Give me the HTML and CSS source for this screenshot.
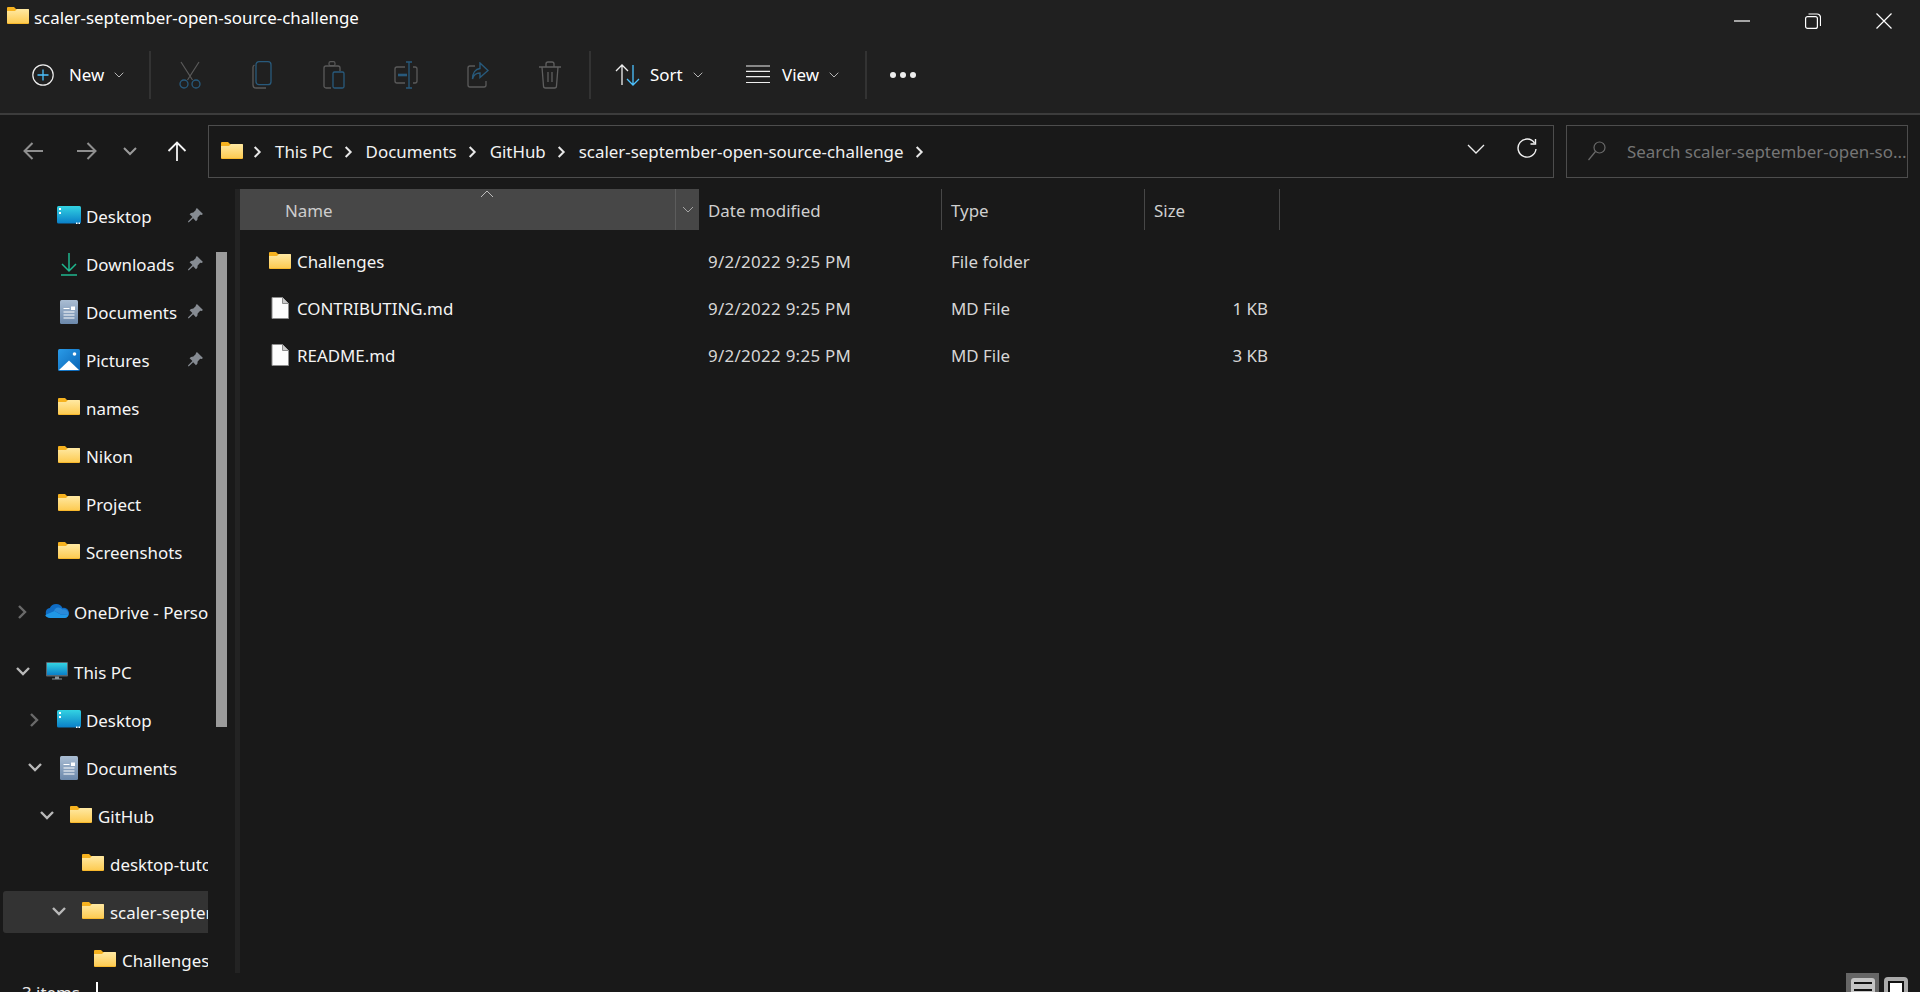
FILE: index.html
```html
<!DOCTYPE html>
<html lang="en">
<head>
<meta charset="utf-8">
<title>scaler-september-open-source-challenge</title>
<link rel="stylesheet" href="styles.css">
</head>
<body>
<svg class="defs" width="0" height="0" aria-hidden="true">
  <defs>
    <linearGradient id="gf" x1="0" y1="0" x2="0" y2="1"><stop offset="0" stop-color="#ffe9a3"/><stop offset="1" stop-color="#fdcb52"/></linearGradient>
    <linearGradient id="gd" x1="0" y1="0" x2="0" y2="1"><stop offset="0" stop-color="#33d3e2"/><stop offset="1" stop-color="#0a7fc8"/></linearGradient>
    <linearGradient id="gdoc" x1="0" y1="0" x2="0" y2="1"><stop offset="0" stop-color="#aabdd3"/><stop offset="1" stop-color="#6b88ab"/></linearGradient>
    <linearGradient id="gp" x1="0" y1="0" x2="1" y2="1"><stop offset="0" stop-color="#2a9be8"/><stop offset="1" stop-color="#0a64b4"/></linearGradient>
    <symbol id="folder" viewBox="0 0 22 17">
      <path d="M0 1a1 1 0 0 1 1-1h6l2 2h12a1 1 0 0 1 1 1v13a1 1 0 0 1-1 1H1a1 1 0 0 1-1-1z" fill="#f6b21f"/>
      <path d="M0 4h8l2-2h11a1 1 0 0 1 1 1v12.4a.8.8 0 0 1-.8.8H.8a.8.8 0 0 1-.8-.8z" fill="url(#gf)"/>
    </symbol>
    <symbol id="file" viewBox="0 0 18 22">
      <path d="M1 .5h10.500l6 6v15H1z" fill="#fdfdfd" stroke="#8c8c8c"/>
      <path d="M11.500.5v6h6" fill="#c9c9c9" stroke="#8c8c8c"/>
    </symbol>
    <symbol id="desktop" viewBox="0 0 24 18">
      <rect width="24" height="17.500" rx="1.500" fill="url(#gd)"/>
      <rect x="2" y="2" width="2" height="2" fill="#fff"/>
      <rect x="2" y="6" width="2" height="2" fill="#fff"/>
      <rect x="19" y="16.500" width="1.500" height="1.500" fill="#fff"/>
      <rect x="21.500" y="16.500" width="1.500" height="1.500" fill="#fff"/>
    </symbol>
    <symbol id="download" viewBox="0 0 24 24">
      <path d="M12 1v17M5 12l7 7 7-7M4 23h16" fill="none" stroke="#1fb78e" stroke-width="1.500"/>
    </symbol>
    <symbol id="document" viewBox="0 0 18 24">
      <rect width="18" height="24" rx="1.500" fill="url(#gdoc)"/>
      <path d="M3.500 8.500h6M3.500 12h11M3.500 15h11M3.500 18h11" stroke="#fff" fill="none"/>
      <rect x="11" y="6.500" width="4" height="3.500" fill="#fff"/>
    </symbol>
    <symbol id="picture" viewBox="0 0 22 22">
      <rect width="22" height="22" rx="1.500" fill="url(#gp)"/>
      <circle cx="16.500" cy="5" r="1.800" fill="#fff"/>
      <path d="M1 21 11 11.500 21 21z" fill="#fff"/>
    </symbol>
    <symbol id="pin" viewBox="0 0 16 16">
      <path d="M9.500 0 16 6.500l-1.500 1-1.500-.2-2.700 2.700-.3 2.500-1.500 1.500L5.500 10.800 1 15.300 0 15.200l.2-1L4.700 9.700 1.700 6.700 3.200 5.200l2.500-.3L8.400 2.200 8.300 1.200z" fill="#868b92"/>
    </symbol>
    <symbol id="cloud" viewBox="0 0 24 15">
      <path d="M5.500 15A5 5 0 0 1 4.800 5.100 7 7 0 0 1 17.500 5 5 5 0 0 1 20 15z" fill="#0f6cc4"/>
      <path d="M5.500 15c-2.500 0-4.500-.8-5.300-3L9.500 8l6 3.500 8 .5c-.6 2-2 3-4 3z" fill="#1f97e6"/>
      <path d="M9 7.500a5 5 0 0 1 8.500-1 4.800 4.800 0 0 1 6 5.500l-8-.8z" fill="#2a8ad8"/>
    </symbol>
    <symbol id="pc" viewBox="0 0 22 18">
      <rect width="22" height="14.500" rx="1" fill="#59666f"/>
      <rect x="1" y="1" width="20" height="12" fill="url(#gd)"/>
      <path d="M9 14.500h4v2h3v1H6v-1h3z" fill="#8a959c"/>
    </symbol>
    <symbol id="chev-r" viewBox="0 0 12 16"><path d="M2 2l6 6-6 6" fill="none" stroke="currentColor" stroke-width="2.400"/></symbol>
    <symbol id="chev-d" viewBox="0 0 16 12"><path d="M2 2l6 6 6-6" fill="none" stroke="currentColor" stroke-width="2.400"/></symbol>
    <symbol id="chev-s" viewBox="0 0 10 6"><path d="M.7.7 5 5 9.300.7" fill="none" stroke="currentColor"/></symbol>
  </defs>
</svg>

<div class="window">
  <header class="titlebar">
    <svg class="title-icon"><use href="#folder"/></svg>
    <span class="title-text">scaler-september-open-source-challenge</span>
    <div class="win-controls">
      <span class="win-btn"><svg width="16" height="2" viewBox="0 0 16 2"><path d="M0 1h16" stroke="#fff" stroke-width="1.200"/></svg></span>
      <span class="win-btn"><svg width="16" height="16" viewBox="0 0 16 16" fill="none" stroke="#fff" stroke-width="1.200"><rect x=".6" y="3.600" width="11.800" height="11.800" rx="2"/><path d="M3.500 1h8.500a3.500 3.500 0 0 1 3.500 3.500V13"/></svg></span>
      <span class="win-btn"><svg width="16" height="16" viewBox="0 0 16 16" fill="none" stroke="#fff" stroke-width="1.200"><path d="M.5.500l15 15M15.500.500l-15 15"/></svg></span>
    </div>
  </header>

  <div class="toolbar">
    <div class="tbtn tbtn-new">
      <svg width="22" height="22" viewBox="0 0 22 22" fill="none"><circle cx="11" cy="11" r="10.200" stroke="#eee" stroke-width="1.200"/><path d="M11 5.500v11M5.500 11h11" stroke="#4cc2ff" stroke-width="1.300"/></svg>
      <span class="tlabel">New</span>
      <svg class="tchev"><use href="#chev-s"/></svg>
    </div>
    <span class="tsep"></span>
    <div class="ticon"><svg width="22" height="28" viewBox="0 0 22 28" fill="none"><path d="M2 1l11.500 18M20 1 8.500 19" stroke="#5a5a5a" stroke-width="1.200"/><circle cx="5" cy="23" r="4" stroke="#285a7c" stroke-width="1.300"/><circle cx="17" cy="23" r="4" stroke="#285a7c" stroke-width="1.300"/></svg></div>
    <div class="ticon"><svg width="20" height="28" viewBox="0 0 20 28" fill="none"><path d="M2.500 4A3 3 0 0 0 1 7v17a3 3 0 0 0 3 3h10" stroke="#5a5a5a" stroke-width="1.300"/><rect x="4" y=".7" width="15" height="23" rx="3" stroke="#285a7c" stroke-width="1.300"/></svg></div>
    <div class="ticon"><svg width="22" height="28" viewBox="0 0 22 28" fill="none"><path d="M8 27H3a2 2 0 0 1-2-2V7a2 2 0 0 1 2-2h12a2 2 0 0 1 2 2v3" stroke="#5a5a5a" stroke-width="1.300"/><rect x="6" y=".7" width="6" height="4" rx="1.500" stroke="#5a5a5a" stroke-width="1.200"/><rect x="10" y="11" width="11" height="16" rx="1.500" stroke="#285a7c" stroke-width="1.300"/></svg></div>
    <div class="ticon"><svg width="24" height="28" viewBox="0 0 24 28" fill="none"><path d="M11 6H3a2 2 0 0 0-2 2v12a2 2 0 0 0 2 2h8M19 6h2a2 2 0 0 1 2 2v12a2 2 0 0 1-2 2h-2" stroke="#5a5a5a" stroke-width="1.300"/><path d="M15 1v26M12 1h6M12 27h6" stroke="#285a7c" stroke-width="1.300"/><path d="M4 14h9" stroke="#285a7c" stroke-width="2.600"/></svg></div>
    <div class="ticon"><svg width="22" height="26" viewBox="0 0 22 26" fill="none"><path d="M8 4H3a2 2 0 0 0-2 2v17a2 2 0 0 0 2 2h14a2 2 0 0 0 2-2v-4" stroke="#5a5a5a" stroke-width="1.300"/><path d="M13 1l8 7.500-8 7V11C9 11 6.500 13 5.500 17c0-6 3-10 7.500-10.500z" stroke="#285a7c" stroke-width="1.400"/></svg></div>
    <div class="ticon"><svg width="22" height="28" viewBox="0 0 22 28" fill="none" stroke="#5f5f5f" stroke-width="1.300"><path d="M0 6h22M7 6V3a2 2 0 0 1 2-2h4a2 2 0 0 1 2 2v3M3 6l1.500 19a2 2 0 0 0 2 2h9a2 2 0 0 0 2-2L19 6M9 11v10M13 11v10"/></svg></div>
    <span class="tsep"></span>
    <div class="tbtn tbtn-sort">
      <svg width="25" height="22" viewBox="0 0 25 22" fill="none" stroke-width="1.300"><path d="M7 21V1M1 7l6-6 6 6" stroke="#eee"/><path d="M18 1v20M12 15l6 6 6-6" stroke="#4cc2ff"/></svg>
      <span class="tlabel">Sort</span>
      <svg class="tchev"><use href="#chev-s"/></svg>
    </div>
    <div class="tbtn tbtn-view">
      <svg width="24" height="19" viewBox="0 0 24 19" fill="none" stroke="#eee" stroke-width="1.200"><path d="M0 1h24M0 6.300h24M0 11.700h24M0 17.500h24"/></svg>
      <span class="tlabel">View</span>
      <svg class="tchev"><use href="#chev-s"/></svg>
    </div>
    <span class="tsep"></span>
    <div class="tdots"><span></span><span></span><span></span></div>
  </div>

  <nav class="navbar">
    <div class="nav-buttons">
      <svg class="nav-back" width="20" height="18" viewBox="0 0 20 18" fill="none" stroke="#8f8f8f" stroke-width="2"><path d="M20 9H2M9.500 1 1.500 9l8 8"/></svg>
      <svg class="nav-fwd" width="20" height="18" viewBox="0 0 20 18" fill="none" stroke="#8f8f8f" stroke-width="2"><path d="M0 9h18M10.500 1l8 8-8 8"/></svg>
      <svg class="nav-down" width="14" height="9" viewBox="0 0 14 9" fill="none" stroke="#9a9a9a" stroke-width="2"><path d="M1 1l6 6 6-6"/></svg>
      <svg class="nav-up" width="20" height="20" viewBox="0 0 20 20" fill="none" stroke="#f4f4f4" stroke-width="1.800"><path d="M10 20V2M1.500 10 10 1.500l8.500 8.500"/></svg>
    </div>
    <div class="address">
      <svg class="addr-folder"><use href="#folder"/></svg>
      <svg class="crumb-sep crumb-first"><use href="#chev-r"/></svg><span class="crumb">This PC</span>
      <svg class="crumb-sep"><use href="#chev-r"/></svg><span class="crumb">Documents</span>
      <svg class="crumb-sep"><use href="#chev-r"/></svg><span class="crumb">GitHub</span>
      <svg class="crumb-sep"><use href="#chev-r"/></svg><span class="crumb">scaler-september-open-source-challenge</span>
      <svg class="crumb-sep"><use href="#chev-r"/></svg>
      <svg class="addr-drop" width="18" height="10" viewBox="0 0 18 10" fill="none" stroke="#eee" stroke-width="1.300"><path d="M1 1l8 8 8-8"/></svg>
      <svg class="addr-refresh" width="20" height="21" viewBox="0 0 20 21" fill="none" stroke="#f2f2f2" stroke-width="1.400"><path d="M17.500 5A9 9 0 1 0 19 11"/><path d="M18.500 1v5h-5"/></svg>
    </div>
    <div class="search">
      <svg class="search-icon" width="18" height="20" viewBox="0 0 18 20" fill="none" stroke="#6a6a6a" stroke-width="1.200"><circle cx="11.500" cy="6.500" r="5.500"/><path d="M7.500 10.500 .5 19"/></svg>
      <span class="search-text">Search scaler-september-open-so...</span>
    </div>
  </nav>

  <main class="content">
    <aside class="sidebar">
      <div class="tree">
        <div class="row d1"><span class="chev"></span><svg class="ic ic-desktop"><use href="#desktop"/></svg><span class="rtext">Desktop</span><svg class="pin"><use href="#pin"/></svg></div>
        <div class="row d1"><span class="chev"></span><svg class="ic ic-dl"><use href="#download"/></svg><span class="rtext">Downloads</span><svg class="pin"><use href="#pin"/></svg></div>
        <div class="row d1"><span class="chev"></span><svg class="ic ic-doc"><use href="#document"/></svg><span class="rtext">Documents</span><svg class="pin"><use href="#pin"/></svg></div>
        <div class="row d1"><span class="chev"></span><svg class="ic ic-pic"><use href="#picture"/></svg><span class="rtext">Pictures</span><svg class="pin"><use href="#pin"/></svg></div>
        <div class="row d1"><span class="chev"></span><svg class="ic ic-folder"><use href="#folder"/></svg><span class="rtext">names</span></div>
        <div class="row d1"><span class="chev"></span><svg class="ic ic-folder"><use href="#folder"/></svg><span class="rtext">Nikon</span></div>
        <div class="row d1"><span class="chev"></span><svg class="ic ic-folder"><use href="#folder"/></svg><span class="rtext">Project</span></div>
        <div class="row d1"><span class="chev"></span><svg class="ic ic-folder"><use href="#folder"/></svg><span class="rtext">Screenshots</span></div>
        <div class="row d0 group"><span class="chev"><svg class="ch-r"><use href="#chev-r"/></svg></span><svg class="ic ic-cloud"><use href="#cloud"/></svg><span class="rtext">OneDrive - Personal</span></div>
        <div class="row d0 group"><span class="chev"><svg class="ch-d"><use href="#chev-d"/></svg></span><svg class="ic ic-pc"><use href="#pc"/></svg><span class="rtext">This PC</span></div>
        <div class="row d1"><span class="chev"><svg class="ch-r"><use href="#chev-r"/></svg></span><svg class="ic ic-desktop"><use href="#desktop"/></svg><span class="rtext">Desktop</span></div>
        <div class="row d1"><span class="chev"><svg class="ch-d"><use href="#chev-d"/></svg></span><svg class="ic ic-doc"><use href="#document"/></svg><span class="rtext">Documents</span></div>
        <div class="row d2"><span class="chev"><svg class="ch-d"><use href="#chev-d"/></svg></span><svg class="ic ic-folder"><use href="#folder"/></svg><span class="rtext">GitHub</span></div>
        <div class="row d3"><span class="chev"></span><svg class="ic ic-folder"><use href="#folder"/></svg><span class="rtext">desktop-tutorial</span></div>
        <div class="row d3 selected"><span class="chev"><svg class="ch-d"><use href="#chev-d"/></svg></span><svg class="ic ic-folder"><use href="#folder"/></svg><span class="rtext">scaler-september-open-source-challenge</span></div>
        <div class="row d4"><span class="chev"></span><svg class="ic ic-folder"><use href="#folder"/></svg><span class="rtext">Challenges</span></div>
      </div>
      <div class="scrolltrack"><div class="scrollthumb"></div></div>
    </aside>

    <section class="list">
      <div class="head">
        <div class="hcell hname"><span class="hlabel">Name</span>
          <svg class="sortcaret" width="14" height="8" viewBox="0 0 14 8" fill="none" stroke="#bdbdbd"><path d="M1 7l6-6 6 6"/></svg>
          <span class="hdrop"><svg width="12" height="7" viewBox="0 0 12 7" fill="none" stroke="#a5a5a5"><path d="M1 1l5 5 5-5"/></svg></span>
        </div>
        <div class="hcell hdate">Date modified</div>
        <div class="hcell htype">Type</div>
        <div class="hcell hsize">Size</div>
      </div>
      <div class="file file-first">
        <div class="fname"><span class="ficon"><svg class="ic-folder"><use href="#folder"/></svg></span><span>Challenges</span></div>
        <div class="fdate">9/2/2022 9:25 PM</div><div class="ftype">File folder</div><div class="fsize"></div>
      </div>
      <div class="file">
        <div class="fname"><span class="ficon"><svg class="ic-file"><use href="#file"/></svg></span><span>CONTRIBUTING.md</span></div>
        <div class="fdate">9/2/2022 9:25 PM</div><div class="ftype">MD File</div><div class="fsize">1 KB</div>
      </div>
      <div class="file">
        <div class="fname"><span class="ficon"><svg class="ic-file"><use href="#file"/></svg></span><span>README.md</span></div>
        <div class="fdate">9/2/2022 9:25 PM</div><div class="ftype">MD File</div><div class="fsize">3 KB</div>
      </div>
    </section>
  </main>

  <footer class="status">
    <span class="status-text">3 items</span>
    <span class="status-bar"></span>
    <div class="view-toggles">
      <span class="toggle toggle-on"><span class="t-details"></span></span>
      <span class="toggle"><span class="t-large"></span></span>
    </div>
  </footer>
</div>
</body>
</html>
```
FILE: styles.css
```css
* { box-sizing: border-box; }
html, body { margin: 0; height: 100%; overflow: hidden; background: #191919; }
body { font-family: "Noto Sans", "Open Sans", sans-serif; font-size: 16.9px; color: #fff; }
.defs { position: absolute; }
svg { display: block; flex: none; }

.window { height: 992px; display: flex; flex-direction: column; overflow: hidden; }

/* title bar */
.titlebar { height: 40px; flex: none; background: #202020; display: flex; align-items: flex-start; padding-left: 7px; }
.title-icon { width: 22px; height: 17px; margin-top: 7px; }
.title-text { margin-left: 5px; margin-top: 5px; line-height: 26px; }
.win-controls { margin-left: auto; display: flex; width: 213px; padding-top: 13px; margin-right: 1px; }
.win-btn { width: 71px; height: 16px; display: flex; align-items: center; justify-content: center; }

/* toolbar */
.toolbar { height: 75px; flex: none; background: #202020; border-bottom: 2px solid #3c3c3c; display: flex; align-items: center; padding: 0 0 4px 32px; }
.tsep { width: 2px; height: 48px; background: #333; margin: 0 3px; flex: none; }
.tbtn { display: flex; align-items: center; height: 48px; flex: none; }
.tbtn-new { width: 114px; }
.tbtn-new .tlabel { margin-left: 15px; }
.tbtn-sort { width: 152px; padding-left: 21px; }
.tbtn-sort .tlabel { margin-left: 10px; }
.tbtn-view { width: 116px; padding-left: 0; }
.tbtn-view .tlabel { margin-left: 12px; }
.tlabel { line-height: 24px; }
.tchev { width: 10px; height: 6px; margin-left: 10px; color: #b5b5b5; }
.ticon { width: 72px; height: 48px; display: flex; align-items: center; justify-content: center; flex: none; }
.tdots { display: flex; gap: 4px; margin-left: 20px; }
.tdots span { width: 6px; height: 6px; border-radius: 50%; background: #eee; }

/* nav bar */
.navbar { height: 74px; flex: none; background: #191919; display: flex; align-items: flex-start; padding-top: 10px; }
.nav-buttons { width: 208px; height: 52px; flex: none; display: flex; align-items: center; padding-left: 23px; }
.nav-back { margin-right: 34px; }
.nav-fwd { margin-right: 26px; }
.nav-down { margin-right: 30px; }
.address { width: 1346px; height: 53px; flex: none; border: 1px solid #4d4d4d; display: flex; align-items: center; padding-left: 12px; }
.addr-folder { width: 22px; height: 17px; margin-top: -2px; }
.crumb-sep { width: 10px; height: 14px; margin: 0 12px 0 11px; color: #e8e8e8; }
.crumb-first { margin-left: 10px; }
.crumb { line-height: 24px; white-space: nowrap; color: #f2f2f2; }
.addr-drop { margin-left: auto; margin-top: -5px; }
.addr-refresh { margin: -6px 16px 0 32px; }
.search { width: 342px; height: 53px; margin-left: 12px; flex: none; border: 1px solid #4d4d4d; display: flex; align-items: center; padding-left: 21px; }
.search-icon { margin-top: -2px; }
.search-text { margin-left: 21px; color: #757575; white-space: nowrap; overflow: hidden; }

/* main */
.content { flex: 1; min-height: 0; display: flex; background: #191919; }
.sidebar { width: 240px; flex: none; display: flex; border-right: 5px solid #232323; overflow: hidden; }
.tree { width: 208px; flex: none; padding: 6px 0 0 3px; overflow: hidden; display: flex; flex-direction: column; gap: 6px; }
.row { height: 42px; flex: none; display: flex; align-items: center; white-space: nowrap; overflow: hidden; border-radius: 3px 0 0 3px; }
.group { margin-top: 12px; }
.d0 { padding-left: 7px; }
.d1 { padding-left: 19px; }
.d2 { padding-left: 31px; }
.d3 { padding-left: 43px; }
.d4 { padding-left: 55px; }
.selected { background: #333; }
.chev { width: 24px; height: 24px; margin: 0 10px 0 1px; display: flex; align-items: center; justify-content: center; flex: none; color: #b9b9b9; }
.ch-r { width: 12px; height: 16px; color: #6a6a6a; }
.ch-d { width: 16px; height: 12px; }
.ic { margin-right: 5px; width: 24px; height: 24px; padding: 0; flex: none; }
.ic-folder { width: 22px; height: 17px; margin-left: 1px; margin-right: 6px; margin-top: -3px; }
.ic-desktop { width: 24px; height: 18px; margin-top: -2px; }
.ic-dl { width: 24px; height: 24px; }
.ic-doc { width: 18px; height: 24px; margin-left: 3px; margin-right: 8px; }
.ic-pic { width: 22px; height: 22px; margin-left: 1px; margin-right: 6px; }
.ic-cloud { width: 24px; height: 15px; margin-top: -3px; }
.ic-pc { width: 22px; height: 18px; margin-left: 1px; margin-right: 6px; margin-top: -3px; }
.rtext { line-height: 24px; color: #f6f6f6; margin-top: 1px; }
.pin { width: 15px; height: 15px; margin-left: auto; margin-right: 5px; margin-top: -1px; }
.scrolltrack { width: 27px; flex: none; padding: 63px 8px 0; }
.scrollthumb { width: 11px; height: 475px; background: #9b9b9b; }

/* file list */
.list { flex: 1; min-width: 0; }
.head { height: 41px; display: flex; }
.hcell { height: 41px; display: flex; align-items: center; padding: 2px 0 0 9px; color: #cfcfcf; border-right: 1px solid #474747; flex: none; }
.hname { position: relative; width: 459px; background: #474747; padding-left: 45px; border-right: 0; }
.hlabel { color: #cdcdcd; }
.sortcaret { position: absolute; left: 240px; top: 1px; }
.hdrop { position: absolute; right: 0; top: 0; width: 24px; height: 41px; border-left: 1px solid #5c5c5c; display: flex; align-items: center; justify-content: center; }
.hdate { width: 243px; }
.htype { width: 203px; }
.hsize { width: 135px; padding-left: 9px; }
.file { height: 47px; display: flex; align-items: center; color: #f4f4f4; }
.file-first { margin-top: 8px; }
.fname { width: 459px; display: flex; align-items: center; padding-left: 28px; flex: none; }
.ficon { width: 24px; margin-right: 5px; display: flex; justify-content: center; }
.ficon .ic-folder { margin: -3px 0 0 0; }
.ic-file { width: 18px; height: 22px; margin-top: -2px; }
.fdate { width: 243px; padding-left: 9px; flex: none; color: #d6d6d6; letter-spacing: .3px; }
.ftype { width: 203px; padding-left: 9px; flex: none; color: #d6d6d6; }
.fsize { width: 123px; text-align: right; flex: none; color: #d6d6d6; }

/* status bar */
.status { height: 19px; flex: none; background: #191919; display: flex; align-items: flex-start; overflow: hidden; padding-left: 22px; }
.status-text { line-height: 24px; color: #e6e6e6; margin-top: 8px; }
.status-bar { width: 2px; height: 12px; background: #fff; margin: 9px 0 0 16px; }
.view-toggles { margin-left: auto; margin-right: 8px; display: flex; }
.toggle { width: 33px; height: 19px; display: flex; justify-content: center; padding-top: 5px; }
.toggle-on { background: #666; }
.t-details { width: 24px; height: 24px; border-radius: 3px; background-color: #c4c4c4; background-image: linear-gradient(#111 0 2px, transparent 2px 7px, #111 7px 9px, transparent 9px); background-position: 3px 4px; background-size: 18px 20px; background-repeat: no-repeat; }
.t-large { width: 24px; height: 24px; background: #fff; border: 4px solid #aaa; border-radius: 4px; box-shadow: inset 0 0 0 2px #111; margin-top: -1px; }
```
